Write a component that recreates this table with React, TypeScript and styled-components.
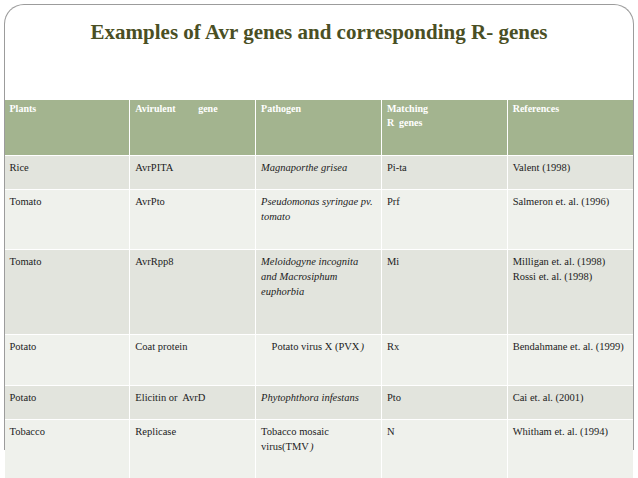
import { FC } from "react";
import styled, { createGlobalStyle } from "styled-components";

const serif = "\"Liberation Serif\", \"Times New Roman\", serif"

const GlobalStyle = createGlobalStyle({
    "html, body": {
        margin: 0,
        padding: 0,
        background: "#ffffff",
        overflow: "hidden",
        fontFamily: serif
    }
})

const Slide = styled.div({
    width: 638,
    height: 478,
    overflow: "hidden",
    fontFamily: serif
})

const Frame = styled.div({
    boxSizing: "border-box",
    margin: "4px 0 0 4px",
    width: 630,
    height: 446,
    border: "1.5px solid #9c9c9c",
    borderBottom: "none",
    borderRadius: "20px 20px 0 0"
})

const Title = styled.h1({
    margin: 0,
    padding: "15px 0 0",
    height: 94.5,
    boxSizing: "border-box",
    textAlign: "center",
    fontFamily: serif,
    fontSize: 21,
    fontWeight: 700,
    color: "#4a4f24"
})

const Grid = styled.div({
    display: "grid",
    width: 628,
    gridTemplateColumns: "repeat(5, 1fr)",
    gridTemplateRows: "55px 33px 59px 84px 50px 33px 60px",
    gap: "1px",
    background: "#ffffff",
    marginLeft: -0.5
})

const HeadCell = styled.div({
    background: "#a3b48f",
    color: "#ffffff",
    fontFamily: serif,
    fontWeight: 700,
    fontSize: 10,
    lineHeight: "14px",
    padding: "2px 5px",
    whiteSpace: "pre"
})

const Cell = styled.div<{ $shade: boolean }>(({ $shade }) => ({
    background: $shade ? "#e2e4dd" : "#eff1ec",
    color: "#1c1c1c",
    fontFamily: serif,
    fontSize: 10.5,
    lineHeight: "15px",
    padding: "4px 5px",
    whiteSpace: "pre"
}))

// one line of a multi-line cell
const Line = styled.div({})

// the slanted closing bracket in "(PVX)" and "(TMV)"
const Slant = styled.i({
    marginLeft: 1
})

const headers = ["Plants", "Avirulent         gene", "Pathogen", "Matching\nR  genes", "References"]

type Row = { cells: (string | JSX.Element)[] }

const rows: Row[] = [
    { cells: ["Rice", "AvrPITA", <i>Magnaporthe grisea</i>, "Pi-ta", "Valent (1998)"] },
    { cells: ["Tomato", "AvrPto", <i>{"Pseudomonas syringae pv.\ntomato"}</i>, "Prf", "Salmeron et. al. (1996)"] },
    { cells: ["Tomato", "AvrRpp8", <i>{"Meloidogyne incognita\nand Macrosiphum\neuphorbia"}</i>, "Mi", "Milligan et. al. (1998)\nRossi et. al. (1998)"] },
    { cells: ["Potato", "Coat protein", <span>{"    Potato virus X (PVX"}<Slant>)</Slant></span>, "Rx", "Bendahmane et. al. (1999)"] },
    { cells: ["Potato", "Elicitin or  AvrD", <i>Phytophthora infestans</i>, "Pto", "Cai et. al. (2001)"] },
    {
        cells: [
            "Tobacco",
            "Replicase",
            <>
                <Line>Tobacco mosaic</Line>
                <Line>virus(TMV<Slant>)</Slant></Line>
            </>,
            "N",
            "Whitham et. al. (1994)"
        ]
    }
]

const App: FC = () => (
    <Slide>
        <GlobalStyle />
        <Frame>
            <Title>Examples of Avr genes and corresponding R- genes</Title>
            <Grid>
                {headers.map((h) => (
                    <HeadCell key={h}>{h}</HeadCell>
                ))}
                {rows.map((row, r) =>
                    row.cells.map((c, i) => (
                        <Cell key={`${r}-${i}`} $shade={r % 2 === 0}>{c}</Cell>
                    ))
                )}
            </Grid>
        </Frame>
    </Slide>
)

export default App
